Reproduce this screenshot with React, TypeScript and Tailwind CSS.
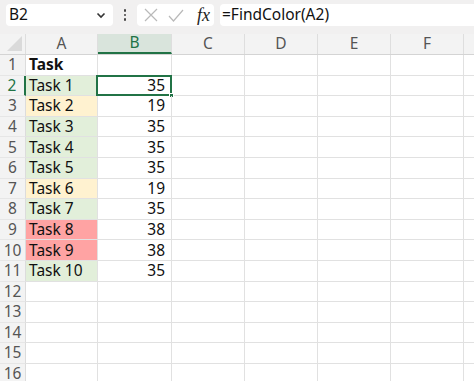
import React from 'react'

const cols = ['A', 'B', 'C', 'D', 'E', 'F', '']
const widths = ['w-[72px]', 'w-[74px]', 'w-[73px]', 'w-[73px]', 'w-[73px]', 'w-[73px]', 'w-[73px]']

type Row = { label?: string; value?: number; fill?: string; bold?: boolean }

const rows: Row[] = [
  { label: 'Task', bold: true },
  { label: 'Task 1', value: 35, fill: 'bg-[#e2efda]' },
  { label: 'Task 2', value: 19, fill: 'bg-[#fff2d0]' },
  { label: 'Task 3', value: 35, fill: 'bg-[#e2efda]' },
  { label: 'Task 4', value: 35, fill: 'bg-[#e2efda]' },
  { label: 'Task 5', value: 35, fill: 'bg-[#e2efda]' },
  { label: 'Task 6', value: 19, fill: 'bg-[#fff2d0]' },
  { label: 'Task 7', value: 35, fill: 'bg-[#e2efda]' },
  { label: 'Task 8', value: 38, fill: 'bg-[#ffa3a3]' },
  { label: 'Task 9', value: 38, fill: 'bg-[#ffa3a3]' },
  { label: 'Task 10', value: 35, fill: 'bg-[#e2efda]' },
  {}, {}, {}, {}, {},
]

export default function App() {
  return (
    <div className="w-[474px] h-[381px] overflow-hidden bg-[#f1f0f0] font-['Noto_Sans',sans-serif] text-[15.5px] text-[#111]">
      {/* formula bar */}
      <div className="h-[34px] flex items-start pt-[4px] pl-[6px] gap-[6px]">
        <div className="w-[107px] h-[22px] bg-white rounded-[4px] flex items-center justify-between pl-[3px] pr-[7px]">
          <span className="leading-none">B2</span>
          <svg width="10" height="7" viewBox="0 0 10 7" fill="none" stroke="#333" strokeWidth="1.6"><path d="M1.5 1.5 5 5l3.5-3.5" /></svg>
        </div>
        <div className="w-[12px] h-[22px] flex flex-col items-center justify-center gap-[2px]">
          <span className="w-[2.5px] h-[2.5px] rounded-full bg-[#444]" />
          <span className="w-[2.5px] h-[2.5px] rounded-full bg-[#444]" />
          <span className="w-[2.5px] h-[2.5px] rounded-full bg-[#444]" />
        </div>
        <div className="w-[77px] h-[22px] bg-white rounded-[4px] flex items-center pl-[7px] gap-[10px]">
          <svg width="14" height="14" viewBox="0 0 14 14" stroke="#b9b9b9" strokeWidth="1.2"><path d="M1 1l12 12M13 1 1 13" /></svg>
          <svg width="16" height="13" viewBox="0 0 16 13" fill="none" stroke="#b9b9b9" strokeWidth="1.2"><path d="M1 7l4.5 5L15 1" /></svg>
          <span className="font-['Liberation_Serif',serif] italic text-[18px] leading-none text-[#222] ml-[3px]">fx</span>
        </div>
        <div className="flex-1 h-[22px] bg-white rounded-l-[4px] flex items-center pl-[2px]">
          <span className="leading-none">=FindColor(A2)</span>
        </div>
      </div>

      {/* sheet */}
      <div className="flex flex-col">
        <div className="flex h-[21px] bg-[#f3f3f3] border-b border-[#d4d4d4]">
          <div className="w-[26px] shrink-0 relative border-r border-[#dedede]">
            <svg className="absolute right-[3px] bottom-[3px]" width="15" height="15" viewBox="0 0 15 15"><path d="M15 0V15H0Z" fill="#dadada" /></svg>
          </div>
          {cols.map((c, i) => (
            <div
              key={i}
              className={`${widths[i]} shrink-0 flex items-center justify-center border-r border-[#dedede] ${c === 'B' ? 'bg-[#d9e4dc] text-[#217346] border-b-2 border-b-[#217346]' : 'text-[#555]'}`}
            >
              {c}
            </div>
          ))}
        </div>
        {rows.map((r, ri) => {
          const n = ri + 1
          const sel = n === 2
          return (
            <div key={n} className="flex h-[20.6px] bg-white">
              <div className={`w-[26px] shrink-0 flex items-center justify-center bg-[#f3f3f3] border-b border-[#e6e6e6] ${sel ? 'text-[#217346] border-r-2 border-r-[#217346]' : 'text-[#555] border-r border-r-[#dcdcdc]'}`}>
                {n}
              </div>
              <div className={`w-[72px] shrink-0 flex items-center pl-[3px] border-r border-b border-[#e1e1e1] ${r.fill ?? ''} ${r.bold ? 'font-bold' : ''}`}>
                {r.label}
              </div>
              <div className="w-[74px] shrink-0 relative flex items-center justify-end pr-[6px] border-r border-b border-[#e1e1e1]">
                {r.value}
                {sel && (
                  <>
                    <div className="absolute -left-[2px] -top-[1px] -right-[1px] -bottom-[1px] border-2 border-[#217346]" />
                    <div className="absolute -right-[3px] -bottom-[3px] w-[5px] h-[5px] bg-[#217346] border border-white" />
                  </>
                )}
              </div>
              {widths.slice(2).map((w, i) => (
                <div key={i} className={`${w} shrink-0 border-r border-b border-[#e1e1e1]`} />
              ))}
            </div>
          )
        })}
      </div>
    </div>
  )
}
